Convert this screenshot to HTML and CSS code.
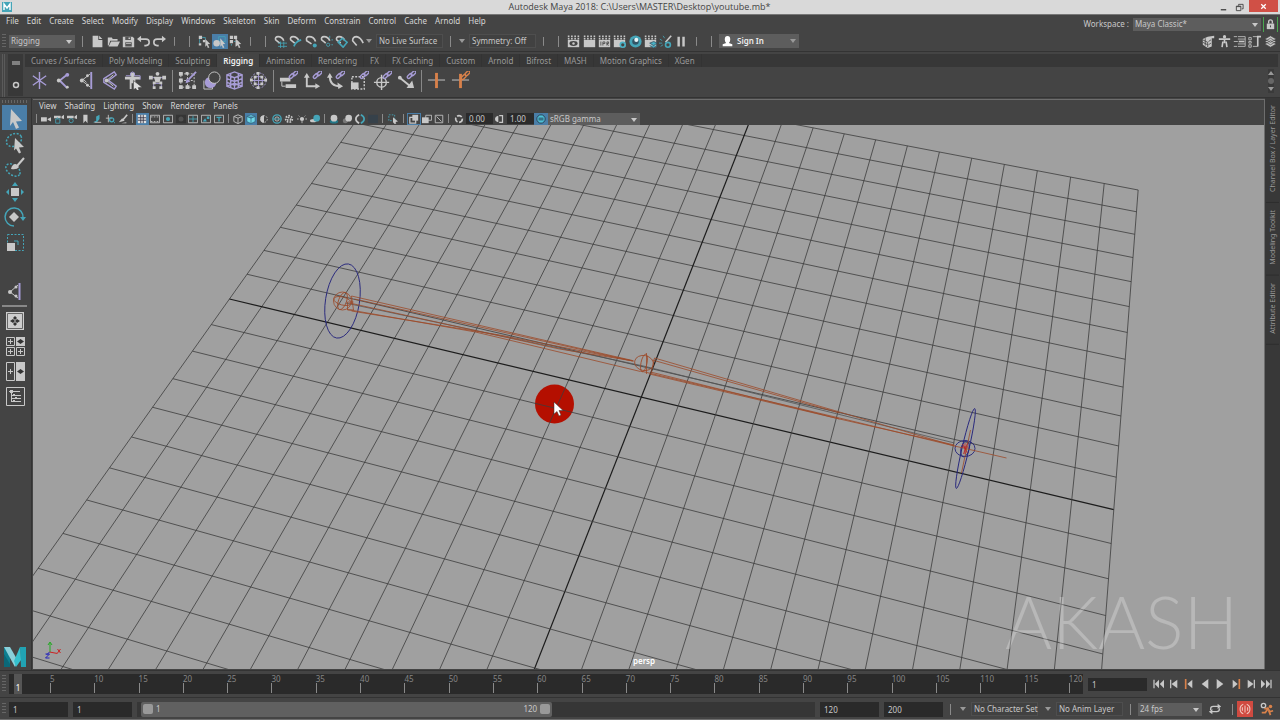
FILE: index.html
```html
<!DOCTYPE html>
<html lang="en">

<head>
    <meta charset="UTF-8">
    <meta name="viewport" content="width=device-width, initial-scale=1.0">
    <title>Autodesk Maya 2018</title>
    <link rel="stylesheet" href="styles.css">
</head>

<body>
    <header class="titlebar">
        <svg class="app-icon" viewBox="0 0 10 10"><path class="tf" d="M0 0h10v10H0z"/><path d="M2 8V2l3 4 3-4v6" fill="none" stroke="#fff" stroke-width="1.4"/></svg>
        <h1>Autodesk Maya 2018: C:\Users\MASTER\Desktop\youtube.mb*</h1>
        <div class="window-buttons">
            <button aria-label="Minimize"><svg viewBox="0 0 10 10"><path d="M2 7.5h6" stroke="#444" stroke-width="1.5"/></svg></button>
            <button aria-label="Restore"><svg viewBox="0 0 10 10"><path d="M4 3V1.500h5v5H7.500M1.500 3.500h5v5h-5zM1.500 4h5" fill="none" stroke="#444"/></svg></button>
            <button class="win-close" aria-label="Close"><svg viewBox="0 0 10 10"><path d="M2.500 2.500l5 5m0-5l-5 5" stroke="#fff" stroke-width="1.400"/></svg></button>
        </div>
    </header>

    <div class="menubar">
        <nav class="menu">
            <a href="#">File</a><a href="#">Edit</a><a href="#">Create</a><a href="#">Select</a><a href="#">Modify</a><a href="#">Display</a><a href="#">Windows</a><a href="#">Skeleton</a><a href="#">Skin</a><a href="#">Deform</a><a href="#">Constrain</a><a href="#">Control</a><a href="#">Cache</a><a href="#">Arnold</a><a href="#">Help</a>
        </nav>
        <div class="workspace">
            <label for="workspace">Workspace :</label>
            <span class="combo combo-workspace"><select id="workspace"><option>Maya Classic*</option></select></span>
            <button class="lock" aria-label="Lock workspace"><svg viewBox="0 0 14 14"><path class="lf" d="M3 6h8v6H3z"/><path class="l w15" d="M5 6V4q0-2 2-2t2 2v2"/><path d="M7 8v2" stroke="#444"/></svg></button>
        </div>
    </div>

    <!-- Status line -->
    <div class="status">
        <i class="grip"></i>
        <span class="combo combo-mode"><select aria-label="Menu set"><option>Rigging</option></select></span>
        <i class="sep"></i>
        <div class="group g5">
            <button aria-label="New scene"><svg viewBox="0 0 16 16"><path class="lf" d="M2 1h7v5h5v9H2zM10 1l4 4h-4z"/></svg></button>
            <button aria-label="Open scene"><svg viewBox="0 0 16 16"><path class="lf" d="M1 3h5l1 2h6v2H4l-2 6H1zM5 8h11l-3 6H2z"/></svg></button>
            <button aria-label="Save scene"><svg viewBox="0 0 16 16"><path class="lf" d="M1 2h12l2 2v11H1z"/><path d="M4 2h7v4H4zM4 9h8v5H4z" fill="#555"/><path class="lf" d="M8 3h2v2H8zM5 10h6v1H5z"/></svg></button>
            <button aria-label="Undo"><svg viewBox="0 0 16 16"><path class="l w2" d="M3 5h8q4 0 4 4t-4 4H9"/><path class="lf" d="M0 5l5-4v8z"/></svg></button>
            <button aria-label="Redo"><svg viewBox="0 0 16 16"><path class="l w2" d="M13 5H5Q1 5 1 9t4 4h2"/><path class="lf" d="M16 5l-5-4v8z"/></svg></button>
        </div>
        <i class="sep tip"></i>
        <i class="sep"></i>
        <div class="group g3">
            <button aria-label="Select by hierarchy"><svg viewBox="0 0 16 16"><path class="lf" d="M1 1h4v4H1zM1 10h3v3H1zM6 6h3v3H6z"/><path class="t" d="M2 5v5M5 3h4v3"/><path class="lf" d="M9 5l6 6-3 .5 2 4-2 .5-1-3.500-2 2z"/></svg></button>
            <button class="active" aria-label="Select by object"><svg viewBox="0 0 16 16"><path class="t" d="M7 2h8v6H7z"/><circle class="lf" cx="4.500" cy="10" r="4"/><path class="lf" d="M9 4l6 7-3 .5 2 4-2 .5-1-3.500-2 2z"/></svg></button>
            <button aria-label="Select by component"><svg viewBox="0 0 16 16"><path class="lf" d="M1 1h4v4H1zM6 1h4v4H6zM1 6h4v4H1z"/><path class="t" d="M6 8h2M3 11v2"/><path class="lf" d="M8 4l7 7-3 .5 2 4-2 .5-1-3.500-3 2z"/></svg></button>
        </div>
        <i class="sep tip"></i>
        <i class="sep"></i>
        <div class="group g6">
            <button aria-label="Snap to grids"><svg viewBox="0 0 16 16"><path class="l w2" d="M7 10L2 6Q1 2 5 2q5 0 7 5"/><path class="t" d="M8 8v8M12 8v8M5 10h11M5 14h11"/></svg></button>
            <button aria-label="Snap to curves"><svg viewBox="0 0 16 16"><path class="l w2" d="M7 10L2 6Q1 2 5 2q5 0 7 5"/><path class="t w2" d="M6 14Q8 8 15 6"/></svg></button>
            <button aria-label="Snap to points"><svg viewBox="0 0 16 16"><path class="l w2" d="M8 11L2 7Q1 2 5 2q6 0 8 6"/><circle class="tf" cx="12" cy="13" r="2.500"/></svg></button>
            <button aria-label="Snap to projected center"><svg viewBox="0 0 16 16"><path class="l w2" d="M7 10L2 6Q1 2 5 2q5 0 7 5"/><circle class="t" cx="10" cy="12" r="2"/><path class="t" d="M12 1v3M14 6h2M14 12h2"/></svg></button>
            <button aria-label="Snap to view planes"><svg viewBox="0 0 16 16"><path class="l w2" d="M7 10L2 6Q1 2 5 2q5 0 7 5"/><path class="t w2" d="M4 9l5-5 6 5-5 6z"/></svg></button>
            <button aria-label="Make live"><svg viewBox="0 0 16 16"><path class="l w2" d="M7 13L2 7Q2 2 7 2q5 1 8 8"/></svg></button>
        </div>
        <i class="caret"></i>
        <button class="field-btn">No Live Surface</button>
        <i class="sep"></i>
        <i class="caret"></i>
        <button class="field-btn">Symmetry: Off</button>
        <i class="sep tip"></i>
        <i class="sep"></i>
        <div class="group g8">
            <button aria-label="Open render view"><svg viewBox="0 0 16 16"><path class="clap" d="M1 1.500h14M1 4.500h14"/><path class="lf" d="M1 6h14v9H1z"/><ellipse cx="8" cy="10.500" rx="5" ry="3" fill="#444"/><circle class="lf" cx="8" cy="10.500" r="1.500"/></svg></button>
            <button aria-label="Render current frame"><svg viewBox="0 0 16 16"><path class="clap" d="M1 1.500h14M1 4.500h14"/><path class="lf" d="M1 6h14v9H1z"/></svg></button>
            <button aria-label="IPR render"><svg viewBox="0 0 16 16"><path class="clap" d="M1 1.500h14M1 4.500h14"/><path class="lf" d="M1 6h14v9H1z"/><path d="M3.500 8v5M6 13V8.500h2.500v2H6M11 13V8.500h2v2h-2l2 2.500" fill="none" stroke="#444"/></svg></button>
            <button aria-label="Render settings"><svg viewBox="0 0 16 16"><path class="clap" d="M1 1.500h14M1 4.500h14"/><path class="lf" d="M1 6h14v9H1z"/><circle cx="12" cy="12" r="3" fill="#444" stroke="#4ab0c4" stroke-width="2"/></svg></button>
            <button aria-label="Hypershade"><svg viewBox="0 0 16 16"><circle class="tf" cx="8" cy="8" r="7.500"/><circle cx="8" cy="8" r="4" fill="#356"/><circle cx="9" cy="6" r="2.500" fill="#e8f5f8"/></svg></button>
            <button aria-label="Render setup"><svg viewBox="0 0 16 16"><path class="clap" d="M1 1.500h14M1 4.500h14"/><path class="lf" d="M1 6h14v9H1z"/><path d="M7 10l5-2 4 2-4 3zM7 13l5 3 4-3" fill="#4ab0c4" stroke="#356"/></svg></button>
            <button aria-label="Light editor"><svg viewBox="0 0 16 16"><path class="l w2" d="M15 1L8 9"/><path class="t" d="M1 5l3 2M0 10h4M5 1l2 3M2 14l3-2"/><circle class="t w2" cx="11" cy="12" r="3"/></svg></button>
            <button aria-label="Pause viewport"><svg viewBox="0 0 16 16"><path class="lf" d="M3 2h3v12H3zM9 2h3v12H9z"/></svg></button>
        </div>
        <i class="sep tip"></i>
        <i class="sep"></i>
        <button class="signin"><svg viewBox="0 0 16 16"><path fill="#fff" d="M4 5q0-5 4-5t4 5q0 3-2 5l5 2v3H1v-3l5-2Q4 8 4 5z"/></svg><span>Sign In</span><i class="caret"></i></button>
        <div class="group g5 status-end">
            <button aria-label="Modeling toolkit"><svg viewBox="0 0 16 16"><path class="lf" d="M1 5l6-3 8-1v3h-3v10l-5 2-6-4z"/><path d="M1 6l6 3v6M4 4v9M1 9l6 3M8 8l3-2M8 12l3-2" fill="none" stroke="#444"/></svg></button>
            <button aria-label="Character controls"><svg viewBox="0 0 16 16"><path class="l w2" d="M1 5h14M8 4v6M6 8L5 15M10 8l1 7"/><circle class="lf" cx="8" cy="2" r="2"/></svg></button>
            <button aria-label="Attribute editor"><svg viewBox="0 0 16 16"><path class="l" d="M1 2h4M6 2h9M6 5h9M1 8h5M6 11h9M1 14h4M6 14h9M15 2v12"/><path class="l w2" d="M7 8h7"/></svg></button>
            <button aria-label="Tool settings"><svg viewBox="0 0 16 16"><path class="l" d="M1 3h3v3H1zM1 8h3v2H1zM1 12h3v3H1zM6 2h6M6 14h6"/><path class="l w2" d="M11 2h5M12 3v11"/></svg></button>
            <button aria-label="Channel box"><svg viewBox="0 0 16 16"><path d="M1 11l7-4 7 4-7 4zM1 8l7-4 7 4-7 4zM1 5l7-4 7 4-7 4z" fill="#c8c8c8" stroke="#444" stroke-width=".8"/></svg></button>
        </div>
    </div>

    <!-- Shelf -->
    <div class="shelf">
        <i class="grip"></i>
        <div class="shelf-side">
            <button aria-label="Shelf tabs"><svg viewBox="0 0 8 8"><path class="l" d="M0 3h8M0 5h8"/></svg></button>
            <button aria-label="Shelf options"><svg viewBox="0 0 8 8"><circle class="l w15" cx="4" cy="4" r="2.500"/></svg></button>
        </div>
        <div class="shelf-main">
            <div class="tabs">
                <button>Curves / Surfaces</button><button>Poly Modeling</button><button>Sculpting</button><button class="current">Rigging</button><button>Animation</button><button>Rendering</button><button>FX</button><button>FX Caching</button><button>Custom</button><button>Arnold</button><button>Bifrost</button><button>MASH</button><button>Motion Graphics</button><button>XGen</button>
            </div>
            <div class="shelf-tools">
                <div class="group s6">
                    <button aria-label="Locator"><svg viewBox="0 0 20 20"><path class="p w15" d="M10 1v18M3 5l14 10M17 5L3 15"/></svg></button>
                    <button aria-label="Create joints"><svg viewBox="0 0 20 20"><path class="p w2" d="M15 3L6 10l8 8"/><circle class="lf" cx="5" cy="10" r="2"/><circle class="pf" cx="14" cy="4" r="2"/><circle class="lf" cx="14" cy="17" r="1.500"/></svg></button>
                    <button aria-label="IK handle"><svg viewBox="0 0 20 20"><path class="l" d="M14 3L5 10l9 7M6 8l4 4"/><circle class="lf" cx="5" cy="10" r="2"/><circle class="lf" cx="11" cy="5" r="1.500"/><circle class="lf" cx="11" cy="15" r="1.500"/><path class="p w2" d="M15 1v18"/></svg></button>
                    <button aria-label="Bind skin"><svg viewBox="0 0 20 20"><path class="p w15" d="M14 1L3 8v4l11 7 2-3-8-6 8-6z"/><path class="l" d="M13 4L6 10l7 6"/><circle class="lf" cx="6" cy="10" r="2"/></svg></button>
                    <button aria-label="Quick rig"><svg viewBox="0 0 20 20"><circle class="lf" cx="9" cy="4" r="2.500"/><path class="lf" d="M1 6h16v3h-5v10h-2v-6H8v6H6V9H1z"/><path class="p" d="M2 5h5q-1-4 2-4t2 4h6v4"/><path d="M10 10l9 7-4 .5 1 3-2 .5-2-3-2 2z" fill="#ddd" stroke="#444" stroke-width=".7"/></svg></button>
                    <button aria-label="Human IK"><svg viewBox="0 0 20 20"><circle class="lf" cx="10" cy="3" r="2"/><path class="p" d="M3 7h14M6 18v-5h8v5"/><path class="lf" d="M6 6h8l-2 6H8zM1 5h4v4H1zM15 5h4v4h-4zM5 11h3v3H5zM12 11h3v3h-3zM5 16h3v3H5zM12 16h3v3h-3z"/></svg></button>
                </div>
                <i class="shelf-sep"></i>
                <div class="group s4">
                    <button aria-label="Paint weights"><svg viewBox="0 0 20 20"><path class="l dash" d="M3 3h14v14H3zM10 3v14M3 10h14"/><path class="lf" d="M1 1h4v4H1zM8 1h3v3H8zM1 8h4v4H1zM1 15h4v4H1zM8 15h4v4H8zM15 15h4v4h-4z"/><path class="p w2" d="M19 1l-8 8"/><path class="pf" d="M8 13l1-5 4 3z"/></svg></button>
                    <button aria-label="Blend shape"><svg viewBox="0 0 20 20"><path class="l" d="M2 10v9h9v-3"/><circle class="pf" cx="9" cy="12" r="6"/><circle cx="13" cy="7" r="6" fill="#444" stroke="#c8c8c8"/></svg></button>
                    <button aria-label="Lattice"><svg viewBox="0 0 20 20"><path class="p w15" d="M2 4l8-3 8 3v12l-8 3-8-3zM2 4l8 3 8-3M2 8l8 3 8-3M2 12l8 3 8-3M10 7v12M6 3v14M14 3v14M2 16l8-3 8 3"/></svg></button>
                    <button aria-label="Cluster"><svg viewBox="0 0 20 20"><circle class="p dash" cx="10" cy="10" r="8"/><path class="p" d="M10 3v14M3 10h14M6 6h8v8H6z"/><path class="lf" d="M8 1h3v3H8zM8 16h3v3H8zM1 8h3v3H1zM16 8h3v3h-3zM5 5h3v3H5zM12 5h3v3h-3zM5 12h3v3H5zM12 12h3v3h-3z"/></svg></button>
                </div>
                <i class="shelf-sep"></i>
                <div class="group s6">
                    <button aria-label="Parent constraint"><svg viewBox="0 0 20 20"><path class="lf" d="M1 7h11v4H1zM7 14h11v4H7z"/><path class="l" d="M3 11v5h4"/><g class="p w15"><rect x="10" y="4" width="6" height="3" rx="1.500" transform="rotate(-45 13 5)"/><rect x="14" y="1" width="6" height="3" rx="1.500" transform="rotate(-45 17 2)"/></g></svg></button>
                    <button aria-label="Point constraint"><svg viewBox="0 0 20 20"><path class="l w2" d="M4 5v11h11"/><path class="lf" d="M1 7l3-5 3 5zM13 13l5 3-5 3z"/><g class="p w15"><rect x="10" y="4" width="6" height="3" rx="1.500" transform="rotate(-45 13 5)"/><rect x="14" y="1" width="6" height="3" rx="1.500" transform="rotate(-45 17 2)"/></g></svg></button>
                    <button aria-label="Orient constraint"><svg viewBox="0 0 20 20"><path class="l w2" d="M4 6q0 10 11 10"/><path class="lf" d="M1 7l3-5 3 5zM12 12l6 4-5 3z"/><g class="p w15"><rect x="10" y="4" width="6" height="3" rx="1.500" transform="rotate(-45 13 5)"/><rect x="14" y="1" width="6" height="3" rx="1.500" transform="rotate(-45 17 2)"/></g></svg></button>
                    <button aria-label="Scale constraint"><svg viewBox="0 0 20 20"><path class="l dash w15" d="M2 6h13v13H2z"/><path class="lf" d="M1 12h8v7H1z"/><g class="p w15"><rect x="10" y="4" width="6" height="3" rx="1.500" transform="rotate(-45 13 5)"/><rect x="14" y="1" width="6" height="3" rx="1.500" transform="rotate(-45 17 2)"/></g></svg></button>
                    <button aria-label="Aim constraint"><svg viewBox="0 0 20 20"><circle class="l w15" cx="9" cy="12" r="5"/><path class="l w15" d="M9 4v16M1 12h16"/><g class="p w15"><rect x="10" y="4" width="6" height="3" rx="1.500" transform="rotate(-45 13 5)"/><rect x="14" y="1" width="6" height="3" rx="1.500" transform="rotate(-45 17 2)"/></g></svg></button>
                    <button aria-label="Pole vector constraint"><svg viewBox="0 0 20 20"><path class="l w2" d="M3 7l11 9"/><circle class="lf" cx="3" cy="7" r="2"/><path class="lf" d="M10 18h8l-2-8z"/><g class="p w15"><rect x="10" y="4" width="6" height="3" rx="1.500" transform="rotate(-45 13 5)"/><rect x="14" y="1" width="6" height="3" rx="1.500" transform="rotate(-45 17 2)"/></g></svg></button>
                </div>
                <i class="shelf-sep"></i>
                <div class="group s2">
                    <button aria-label="Set key"><svg viewBox="0 0 20 20"><path class="l" d="M1 9.500h18"/><path class="o w3" d="M10 2v16"/></svg></button>
                    <button aria-label="Set driven key"><svg viewBox="0 0 20 20"><path class="l" d="M1 9.500h18"/><path class="o w3" d="M10 3v15"/><g class="o w15"><rect x="10" y="5" width="6" height="3" rx="1.500" transform="rotate(-45 13 6)"/><rect x="14" y="1" width="6" height="3" rx="1.500" transform="rotate(-45 17 2)"/></g></svg></button>
                </div>
                <div class="shelf-scroll"><i class="up"></i><i class="knob"></i><i class="caret"></i></div>
            </div>
        </div>
    </div>

    <main class="workarea">
        <aside class="toolbox">
            <i class="grip-h"></i>
            <button class="active" aria-label="Select tool"><svg viewBox="0 0 24 24"><path class="lf" d="M8 3l11 12-6 .5 3 6-3 1.500-3-7-3 4z"/></svg></button>
            <button aria-label="Lasso tool"><svg viewBox="0 0 24 24"><ellipse class="t w15 dash" cx="11" cy="9" rx="8" ry="6" transform="rotate(-30 11 9)"/><path class="lf" d="M12 7l9 9-5 .5 2 5-2 1-3-5-2 2z"/></svg></button>
            <button aria-label="Paint selection tool"><svg viewBox="0 0 24 24"><ellipse class="t w15 dash" cx="10" cy="14" rx="8" ry="5" transform="rotate(35 10 14)"/><path class="l w2" d="M21 2l-7 8"/><path class="lf" d="M8 13q1-5 5-5l3 3q-2 3-8 2z"/></svg></button>
            <button aria-label="Move tool"><svg viewBox="0 0 24 24"><path class="lf" d="M8 7h8v8H8z"/><path class="tf" d="M12 1l3 4H9zM12 21l3-4H9zM3 11l3-3v6zM21 11l-3-3v6z"/></svg></button>
            <button aria-label="Rotate tool"><svg viewBox="0 0 24 24"><path class="t w15" d="M11 20A9 9 0 1 1 20 12"/><path class="tf" d="M17 11h6l-3 4z"/><path class="lf" d="M11 6l5 5-5 5-5-5z"/></svg></button>
            <button aria-label="Scale tool"><svg viewBox="0 0 24 24"><path class="t dash" d="M4.500 3.500h16v16h-16z"/><path class="t" d="M11 10h4v4"/><path class="lf" d="M4 12h8v8H4z"/></svg></button>
            <button class="last-tool" aria-label="IK handle tool"><svg viewBox="0 0 24 24"><path class="l" d="M15 5l-8 7 8 6"/><circle class="lf" cx="7" cy="12" r="2"/><circle class="lf" cx="13" cy="7" r="1.500"/><circle class="lf" cx="13" cy="16" r="1.500"/><path class="p w2" d="M16.500 3v17"/></svg></button>
            <hr>
            <button aria-label="Single view"><svg viewBox="0 0 24 24"><path d="M3 3h18v18H3z" fill="#ccc"/><path d="M4.500 4.500h15v15h-15z" fill="none" stroke="#666"/><path d="M12 7l2 2-2 2-2-2zM12 13l2 2-2 2-2-2zM7 12l3-2 2 2-2 2zM12 12l2-2 3 2-3 2z" fill="#333"/></svg></button>
            <button aria-label="Four view"><svg viewBox="0 0 24 24"><path class="l" d="M3.500 3.500h8v8h-8zM3.500 13.500h8v8h-8zM13.500 13.500h8v8h-8zM5 7.500h5M7.500 5v5M5 17.500h5M7.500 15v5M15 17.500h5M17.500 15v5"/><path class="lf" d="M13 3h9v9h-9z"/><path d="M14 7.500l3.500-2.500L21 7.500 17.500 10z" fill="#333"/></svg></button>
            <button aria-label="Two view"><svg viewBox="0 0 24 24"><path class="l" d="M3.500 3.500h8v18h-8zM5 12.500h5M7.500 10v5"/><path class="lf" d="M13 3h9v19h-9z"/><path d="M14 12.500l3.500-2.500 3.500 2.500-3.500 2.500z" fill="#333"/></svg></button>
            <button aria-label="Outliner"><svg viewBox="0 0 24 24"><path class="l" d="M3.500 3.500h18v18h-18zM6 7.500h11M8.500 7v11M9 11.500h9M9 14.500h9M9 17.500h9"/><path class="lf" d="M7 6h3v3H7zM10 10h2v2h-2zM12 13h2v2h-2zM10 16h2v2h-2z"/></svg></button>
            <svg class="maya-logo" viewBox="0 0 24 22"><path fill="#0d7f90" d="M1 1h6v20H1z"/><path fill="#8ad0da" d="M1 1h6l8 14-3 6z"/><path fill="#21a3b4" d="M17 1h6v20h-5z"/><path fill="#35c0cd" d="M17 1l1 13-5 7-2-6z"/><path fill="#0a6878" d="M1 21V8l6 10v3z"/></svg>
        </aside>

        <section class="panel">
            <nav class="menu panel-menu">
                <a href="#">View</a><a href="#">Shading</a><a href="#">Lighting</a><a href="#">Show</a><a href="#">Renderer</a><a href="#">Panels</a>
            </nav>
            <div class="panel-tools">
                <i class="sep"></i>
                <div class="group p7">
                    <button aria-label="Select camera"><svg viewBox="0 0 12 12"><path class="lf" d="M0 4h7v5H0zM8 6l4-2v5L8 7z"/></svg></button>
                    <button aria-label="Lock camera"><svg viewBox="0 0 12 12"><path class="lf" d="M0 2h8v3H0zM9 3l3-2v5L9 5z"/><path class="t" d="M2 6h5v5H2zM4 4v2"/></svg></button>
                    <button aria-label="Camera attributes"><svg viewBox="0 0 12 12"><path class="lf" d="M0 2h8v3H0zM9 3l3-2v5L9 5z"/><circle class="t" cx="5" cy="8" r="2.500"/></svg></button>
                    <button aria-label="Bookmarks"><svg viewBox="0 0 12 12"><path class="lf" d="M4 1h5v10L6.500 8 4 11z"/></svg></button>
                    <button aria-label="Image plane"><svg viewBox="0 0 12 12"><path class="tf" d="M1 10l4-2V3l4-2v5l-3 4z"/><path class="l" d="M3 10h8"/></svg></button>
                    <button aria-label="2D pan/zoom"><svg viewBox="0 0 12 12"><path class="l" d="M4 1v9M1 5h7"/><circle class="t w15" cx="8" cy="7" r="2.500"/><path class="t" d="M10 9l2 2"/></svg></button>
                    <button aria-label="Grease pencil"><svg viewBox="0 0 12 12"><path class="l w2" d="M11 1L6 7"/><path class="lf" d="M1 10l4-5 3 3zM4 11h6v-1z"/></svg></button>
                </div>
                <i class="sep"></i>
                <div class="group p7">
                    <button class="active" aria-label="Grid"><svg viewBox="0 0 12 12"><path fill="#e0e0e0" d="M1 1h10v10H1z"/><path d="M4.500 1v10M7.500 1v10M1 4.500h10M1 7.500h10" stroke="#334"/></svg></button>
                    <button aria-label="Film gate"><svg viewBox="0 0 12 12"><path class="l" d="M.5 1.500h11v9H.5z"/><path class="l dash" d="M1 3.500h10M1 9h10"/></svg></button>
                    <button aria-label="Resolution gate"><svg viewBox="0 0 12 12"><path class="l" d="M.5 1.500h11v9H.5z"/><circle class="tf" cx="6" cy="6" r="2.500"/></svg></button>
                    <button aria-label="Gate mask"><svg viewBox="0 0 12 12"><path fill="#353535" d="M0 1h12v10H0z"/><circle fill="#505050" cx="6" cy="6" r="3"/></svg></button>
                    <button aria-label="Field chart"><svg viewBox="0 0 12 12"><path class="l" d="M.5 1.500h11v9H.5z"/><path class="t" d="M6 2v8M1 6h10"/></svg></button>
                    <button aria-label="Safe action"><svg viewBox="0 0 12 12"><path class="l" d="M.5 1.500h11v9H.5z"/><path class="tf" d="M2 9l3-4 2 4zM7 3h3v3H7z"/></svg></button>
                    <button aria-label="Safe title"><svg viewBox="0 0 12 12"><path class="l" d="M.5 1.500h11v9H.5z"/><path class="t w15" d="M3 4h6M6 4v5"/></svg></button>
                </div>
                <i class="sep"></i>
                <div class="group p7">
                    <button aria-label="Wireframe"><svg viewBox="0 0 12 12"><path class="l" d="M6 1l5 2v6l-5 2.500L1 9V3zM1 3l5 2 5-2M6 5v6"/></svg></button>
                    <button class="active" aria-label="Smooth shade"><svg viewBox="0 0 12 12"><path fill="#6fd6e8" stroke="#26586a" stroke-width=".7" d="M6 1l5 2v6l-5 2.500L1 9V3zM1 3l5 2 5-2M6 5v6"/></svg></button>
                    <button aria-label="Default material"><svg viewBox="0 0 12 12"><circle class="l dash" cx="6" cy="6" r="4"/><path class="lf" d="M6 1.500a4.500 4.500 0 0 0 0 9z"/></svg></button>
                    <button aria-label="Wireframe on shaded"><svg viewBox="0 0 12 12"><circle class="t w15" cx="6" cy="6" r="5"/><circle class="l" cx="6" cy="6" r="2.500"/><path class="t" d="M1 6h10"/></svg></button>
                    <button aria-label="Textured"><svg viewBox="0 0 12 12"><circle class="l dash w2" cx="6" cy="6" r="4"/><circle class="l dash w2" cx="6" cy="6" r="2"/></svg></button>
                    <button aria-label="Use all lights"><svg viewBox="0 0 12 12"><circle class="lf" cx="6" cy="6" r="2.500"/><path class="l" d="M6 8v3M0 6h2M10 6h2M2 2l1 1M10 2L9 3"/></svg></button>
                    <button aria-label="Shadows"><svg viewBox="0 0 12 12"><ellipse class="lf" cx="4" cy="8" rx="4" ry="2"/><circle class="tf" cx="8" cy="5" r="4"/></svg></button>
                </div>
                <i class="sep"></i>
                <div class="group p4">
                    <button aria-label="Ambient occlusion"><svg viewBox="0 0 12 12"><ellipse cx="6" cy="9" rx="5" ry="2.500" fill="#278"/><circle class="lf" cx="6" cy="5" r="4"/></svg></button>
                    <button aria-label="Motion blur"><svg viewBox="0 0 12 12"><circle cx="4" cy="8" r="3" fill="#777"/><circle class="lf" cx="8" cy="5" r="4"/></svg></button>
                    <button aria-label="Anti-aliasing"><svg viewBox="0 0 12 12"><path class="l w2" d="M5 1Q1 3 1 6t4 5"/><path class="t w2" d="M7 1q4 2 4 5t-4 5"/></svg></button>
                    <button aria-label="Depth of field"><svg viewBox="0 0 12 12"><path fill="#36414a" d="M0 1h12v10H0z"/></svg></button>
                </div>
                <i class="sep"></i>
                <div class="group p1">
                    <button aria-label="Isolate select"><svg viewBox="0 0 12 12"><path class="t dash" d="M1 1h7v7H1z"/><path class="lf" d="M6 4l6 5-3 .5 1 2-2 .5-2-2z"/></svg></button>
                </div>
                <i class="sep"></i>
                <div class="group p3">
                    <button class="outlined" aria-label="X-ray"><svg viewBox="0 0 12 12"><path class="lf" d="M4 1h7v7H4z"/><path class="l w15" d="M1 4h7v7H1z"/></svg></button>
                    <button aria-label="X-ray active"><svg viewBox="0 0 12 12"><path class="l" d="M4.500 1.500h7v6h-7z"/><path class="lf" d="M0 4h8v7H0z"/></svg></button>
                    <button aria-label="X-ray joints"><svg viewBox="0 0 12 12"><path class="l" d="M1.500 1.500h9v9h-9zM3 3l6 6"/></svg></button>
                </div>
                <i class="sep"></i>
                <div class="group p1"><button aria-label="Reset exposure"><svg viewBox="0 0 12 12"><circle class="l w2" stroke-dasharray="6 2" cx="6" cy="6" r="4"/></svg></button></div>
                <input class="num" aria-label="Exposure" value="0.00">
                <div class="group p1"><button aria-label="Reset gamma"><svg viewBox="0 0 12 12"><path class="lf" d="M4 2v8Q0 9 0 6t4-4z"/><path class="l w15" d="M5 2h4v8H5"/></svg></button></div>
                <input class="num" aria-label="Gamma" value="1.00">
                <div class="group p1"><button class="active" aria-label="Color management"><svg viewBox="0 0 12 12"><circle cx="6" cy="6" r="5" fill="#4fc0d8" stroke="#234"/><path d="M3 5h6M3 7h6" stroke="#234"/></svg></button></div>
                <span class="combo combo-gamma"><select aria-label="View transform"><option>sRGB gamma</option></select></span>
            </div>
            <div class="viewport">
                <svg class="scene" viewBox="33 125 1232 544" preserveAspectRatio="xMidYMid slice">
                    <circle cx="555" cy="404" r="19.500" fill="#b40f00"/>
                    <g id="grid"></g>
                    <g class="control">
                        <ellipse cx="343" cy="301" rx="17" ry="37.500" transform="rotate(9 343 301)"/>
                        <ellipse cx="966" cy="448.500" rx="3.500" ry="41" transform="rotate(13 966 448.500)"/>
                        <ellipse cx="965.500" cy="448.500" rx="10" ry="8"/>
                        <ellipse cx="965.500" cy="449" rx="4" ry="8" transform="rotate(13 965.500 449)"/>
                    </g>
                    <path class="axis-bone" d="M346 303L644 366L955 443"/>
                    <g class="bone">
                        <circle cx="343" cy="301" r="9"/>
                        <ellipse cx="343" cy="301" rx="4" ry="9" transform="rotate(20 343 301)"/>
                        <ellipse cx="343" cy="301" rx="9" ry="4" transform="rotate(15 343 301)"/>
                        <path d="M352 296l2 14h-6v-8h6M352 296L633 360.500M355 299L633 361M348 309.500L476 332L641 371.500M352 311L500 335L634 361M350 303L560 349L634 361"/>
                        <ellipse cx="644.500" cy="363" rx="9.500" ry="7.500" transform="rotate(12 644.500 363)"/>
                        <ellipse cx="644.500" cy="363" rx="3" ry="9" transform="rotate(12 644.500 363)"/>
                        <path d="M655 358l-3 14M647 353v21"/>
                        <path d="M655 358L840 412L955 446M653 360L840 413M641 371L840 418L955 446M651 372L840 419L955 445M650 374L840 419"/>
                        <path d="M955 446L1007 458M971 430l-9 43"/>
                    </g>
                    <path d="M963 444l5 9M968 443l-4 11M965.500 443v11M962 447h7" stroke="#b22" stroke-width=".8" fill="none"/>
                    <g class="gnomon">
                        <path d="M50.500 652v-9m-2 2l2-3 2 3" stroke="#2a2"/>
                        <path d="M50 652l8 1.500M58 649l3 4m0-4l-3 4" stroke="#c22"/>
                        <path d="M50 652l-3 3M46 654h4l-4 4h4" stroke="#22b"/>
                    </g>
                    <path d="M554.500 402v12l3-2.500 2 4.500 2-1-2-4.500h4z" fill="#fff" stroke="#333" stroke-width=".5"/>
                </svg>
                <span class="camera-name">persp</span>
                <span class="watermark">AKASH</span>
            </div>
        </section>

        <aside class="side-tabs">
            <button>Channel Box / Layer Editor</button>
            <button>Modeling Toolkit</button>
            <button>Attribute Editor</button>
        </aside>
    </main>

    <div class="timeline">
        <i class="grip"></i>
        <div class="track">
            <span class="playhead">1</span>
            <ol id="ticks"></ol>
        </div>
        <input class="frame" aria-label="Current time" value="1">
        <div class="group playback">
            <button aria-label="Go to start"><svg viewBox="0 0 14 12"><path class="l w15" d="M1 1v10"/><path class="lf" d="M7 1v10L2 6zM13 1v10L8 6z"/></svg></button>
            <button aria-label="Step back frame"><svg viewBox="0 0 14 12"><path class="l w15" d="M3 1v10"/><path class="lf" d="M11 1v10L4 6z"/></svg></button>
            <button aria-label="Step back key"><svg viewBox="0 0 14 12"><path class="o w2" d="M3 0v12"/><path class="lf" d="M11 1v10L5 6z"/></svg></button>
            <button aria-label="Play backwards"><svg viewBox="0 0 14 12"><path class="lf" d="M11 0v12L3 6z"/></svg></button>
            <button aria-label="Play forwards"><svg viewBox="0 0 14 12"><path class="lf" d="M3 0v12l8-6z"/></svg></button>
            <button aria-label="Step forward key"><svg viewBox="0 0 14 12"><path class="o w2" d="M11 0v12"/><path class="lf" d="M3 1v10l6-5z"/></svg></button>
            <button aria-label="Step forward frame"><svg viewBox="0 0 14 12"><path class="l w15" d="M11 1v10"/><path class="lf" d="M3 1v10l7-5z"/></svg></button>
            <button aria-label="Go to end"><svg viewBox="0 0 14 12"><path class="l w15" d="M13 1v10"/><path class="lf" d="M1 1v10l5-5zM7 1v10l5-5z"/></svg></button>
        </div>
    </div>

    <div class="range">
        <i class="grip"></i>
        <input class="frame" aria-label="Animation start" value="1">
        <input class="frame" aria-label="Playback start" value="1">
        <div class="range-slider">
            <div class="range-bar"><i></i><span>1</span><span class="range-end">120</span><i></i></div>
        </div>
        <input class="frame" aria-label="Playback end" value="120">
        <input class="frame" aria-label="Animation end" value="200">
        <i class="sep"></i>
        <i class="caret"></i>
        <button class="field-btn">No Character Set</button>
        <i class="caret"></i>
        <button class="field-btn">No Anim Layer</button>
        <i class="sep"></i>
        <span class="combo combo-fps"><select aria-label="Frame rate"><option>24 fps</option></select></span>
        <div class="group range-tools">
            <button aria-label="Loop"><svg viewBox="0 0 16 16"><path class="l w15" d="M3 9V8q0-3 3-3h6M13 7v1q0 3-3 3H4"/><path class="lf" d="M11 2l4 3-4 3zM5 8l-4 3 4 3z"/></svg></button>
            <i class="sep"></i>
            <button class="autokey" aria-label="Auto keyframe"><svg viewBox="0 0 16 16"><path d="M6 2.500a6 6 0 0 0 0 11M10 2.500a6 6 0 0 1 0 11M8 4v8M5 6v4M11 6v4" fill="none" stroke="#f0c8c0" stroke-width="1.200"/></svg></button>
            <button aria-label="Preferences"><svg viewBox="0 0 16 16"><circle class="l w15" cx="4" cy="4" r="2.500"/><circle class="of" cx="12" cy="5" r="2"/><path class="o w2" d="M5 8l4-1 2 4 4-1M9 8l-3 4H2M10 10l2 5"/></svg></button>
        </div>
    </div>

    <script src="scene.js"></script>
</body>

</html>
```
FILE: styles.css
```css
* {
    box-sizing: border-box;
}

body {
    margin: 0;
    height: 100vh;
    display: flex;
    flex-direction: column;
    overflow: hidden;
    background: #444;
    color: #c8c8c8;
    font-family: "Noto Sans", "Open Sans", sans-serif;
    font-size: 8px;
    line-height: 12px;
}

button,
input,
select {
    margin: 0;
    padding: 0;
    border: 0;
    border-radius: 0;
    background: none;
    color: inherit;
    font: inherit;
    white-space: nowrap;
}

a {
    color: inherit;
    text-decoration: none;
}

svg {
    display: block;
}

/* Icon paints: l light, t teal, p purple, o orange */
.l { fill: none; stroke: #c8c8c8; }
.t { fill: none; stroke: #45a5b8; }
.p { fill: none; stroke: #a79cd6; }
.o { fill: none; stroke: #d8814a; }
.lf { fill: #c8c8c8; }
.tf { fill: #45a5b8; }
.pf { fill: #a79cd6; }
.of { fill: #d8814a; }
.w15 { stroke-width: 1.5; }
.w2 { stroke-width: 2; }
.w3 { stroke-width: 3; }
.dash { stroke-dasharray: 2 1.5; }
.clap { stroke: #c8c8c8; stroke-width: 2; stroke-dasharray: 2 2; }

/* Title bar */
.titlebar {
    flex: none;
    height: 15px;
    display: flex;
    align-items: center;
    background: #d9d9d9;
    border-bottom: 1px solid #777;
    color: #444;
}

.titlebar h1 {
    flex: 1;
    margin: 0;
    padding-left: 52px;
    text-align: center;
    font-family: "Open Sans", sans-serif;
    font-size: 9px;
    font-weight: normal;
}

.app-icon {
    width: 10px;
    height: 10px;
    margin-left: 2px;
}

.window-buttons {
    display: flex;
    align-self: stretch;
}

.window-buttons button {
    width: 16px;
    display: grid;
    place-items: center;
}

.window-buttons svg {
    width: 9px;
    height: 9px;
}

.window-buttons .win-close {
    width: 29px;
    height: 12px;
    margin-right: 2px;
    margin-left: 2px;
    background: #d05046;
}

/* Menus */
.menubar {
    flex: none;
    height: 16px;
    display: flex;
    justify-content: space-between;
}

.menu {
    display: flex;
    gap: 8px;
    padding-left: 6px;
    color: #d6d6d6;
}

.workspace {
    display: flex;
    align-items: center;
    padding: 2px 2px 0 0;
}

.workspace label {
    margin-right: 4px;
}

.lock {
    width: 15px;
    height: 15px;
    margin-left: 2px;
    border: solid #4aa850;
    border-width: 0 1px;
}

.combo {
    position: relative;
    display: block;
    flex: none;
    height: 13px;
    background: #5d5d5d;
}

.combo select {
    display: block;
    width: 100%;
    height: 100%;
    padding-left: 2px;
    appearance: none;
}

.combo::after {
    content: "";
    position: absolute;
    right: 3px;
    top: 5px;
    border: solid transparent;
    border-width: 4px 3px 0;
    border-top-color: #c8c8c8;
    pointer-events: none;
}

.combo-workspace { width: 128px; }
.combo-mode { width: 66px; }
.combo-gamma { width: 92px; height: 12px; }
.combo-fps { width: 64px; }

/* Tool groups */
.group {
    flex: none;
    display: flex;
}

.group button {
    flex: 1;
    display: grid;
    place-items: center;
}

.group .active,
.toolbox .active {
    background: #4a7ea8;
}

.g3 { width: 46px; }
.g5 { width: 77px; }
.g6 { width: 92px; }
.g8 { width: 123px; }

.sep {
    flex: none;
    width: 15px;
    height: 11px;
    background: linear-gradient(#8a8a8a, #8a8a8a) center / 1px 100% no-repeat;
}

.sep.tip {
    background-size: 1px 80%;
}

.caret {
    flex: none;
    width: 0;
    border: solid transparent;
    border-width: 4px 3px 0;
    border-top-color: #999;
}

.grip {
    flex: none;
    width: 4px;
    margin: 0 3px 0 2px;
    align-self: stretch;
    background: repeating-linear-gradient(#666 0 1px, transparent 1px 3px);
}

.field-btn {
    flex: none;
    width: 67px;
    height: 14px;
    padding-left: 2px;
    border: 1px solid #4e4e4e;
    background: #414141;
    text-align: left;
}

/* Status line */
.status {
    flex: none;
    height: 21px;
    display: flex;
    align-items: center;
    border-bottom: 1px solid #333;
}

.status .grip {
    margin-top: 3px;
    margin-bottom: 3px;
}

.status .group button {
    height: 15px;
}

.status svg {
    width: 13px;
    height: 13px;
}

.status > .caret {
    margin: 0 4px 0 1px;
}

.signin {
    display: flex;
    align-items: center;
    width: 80px;
    height: 14px;
    padding: 0 3px;
    gap: 4px;
    background: #5d5d5d;
    color: #eee;
    font-weight: 600;
}

.signin svg {
    width: 11px;
    height: 11px;
}

.signin span {
    flex: 1;
    text-align: left;
}

.status-end {
    margin-left: auto;
    margin-right: 2px;
}

/* Shelf */
.shelf {
    flex: none;
    height: 46px;
    display: flex;
    padding-top: 2px;
    border-bottom: 1px solid #333;
}

.shelf .grip {
    width: 3px;
    border: solid #5a5a5a;
    border-width: 0 1px;
    background: none;
}

.shelf-side {
    width: 15px;
    height: 42px;
    display: flex;
    flex-direction: column;
    justify-content: space-between;
    align-items: center;
    padding: 5px 0 7px;
    background: #383838;
}

.shelf-side svg {
    width: 8px;
    height: 8px;
}

.shelf-main {
    flex: 1;
    min-width: 0;
}

.tabs {
    display: flex;
    height: 13px;
    margin: 0 2px;
    background: #373737;
    color: #999;
}

.tabs button {
    padding: 0 6px;
    border-right: 1px solid #333;
}

.tabs .current {
    background: #444;
    color: #eee;
    font-weight: 600;
}

.shelf-tools {
    display: flex;
    align-items: center;
    height: 27px;
    padding-left: 5px;
}

.shelf-tools svg {
    width: 19px;
    height: 19px;
}

.s2 { width: 47px; }
.s4 { width: 94px; }
.s6 { width: 141px; }

.shelf-sep {
    width: 1px;
    height: 22px;
    margin: 0 3px;
    background: #888;
}

.shelf-scroll {
    display: flex;
    flex-direction: column;
    align-items: center;
    gap: 3px;
    margin-left: auto;
    margin-right: 6px;
    padding: 2px 0;
    background: #3a3a3a;
}

.shelf-scroll .up {
    border: solid transparent;
    border-width: 0 3px 4px;
    border-bottom-color: #999;
}

.shelf-scroll .knob {
    width: 6px;
    height: 6px;
    border-radius: 3px;
    background: #666;
}

/* Work area */
.workarea {
    flex: 1;
    min-height: 0;
    display: flex;
}

.toolbox {
    width: 32px;
    flex: none;
    display: flex;
    flex-direction: column;
    padding: 2px 4px 0 2px;
    border-right: 1px solid #333;
}

.grip-h {
    height: 3px;
    margin-bottom: 2px;
    background: repeating-linear-gradient(90deg, #666 0 1px, transparent 1px 3px);
}

.toolbox button {
    height: 25px;
    display: grid;
    place-items: center;
}

.toolbox button svg {
    width: 24px;
    height: 24px;
}

.toolbox .last-tool {
    margin-top: 24px;
}

.toolbox hr {
    flex: none;
    width: 100%;
    height: 2px;
    margin: 1px 0;
    border: 0;
    background: #888;
}

.maya-logo {
    width: 24px;
    height: 22px;
    margin: auto 0 2px 1px;
}

.panel {
    flex: 1;
    min-width: 0;
    display: flex;
    flex-direction: column;
    margin: 1px 0 1px 1px;
    border: solid #6e6e6e;
    border-width: 1px 1px 0 0;
}

.panel-menu {
    height: 12px;
}

.panel-tools {
    display: flex;
    align-items: center;
    height: 13px;
}

.panel-tools .sep {
    width: 7px;
    height: 9px;
}

.panel-tools svg {
    width: 10px;
    height: 10px;
}

.panel-tools .group button {
    height: 12px;
}

.panel-tools .outlined {
    border: 1px solid #4a7ea8;
}

.p1 { width: 14px; }
.p3 { width: 38px; }
.p4 { width: 51px; }
.p7 { width: 89px; }

.num {
    width: 27px;
    height: 11px;
    padding-left: 3px;
    background: #2b2b2b;
}

.viewport {
    flex: 1;
    min-height: 0;
    position: relative;
    background: #a0a0a0;
}

.scene {
    position: absolute;
    width: 100%;
    height: 100%;
}

#grid line {
    stroke: #3c3c3c;
    stroke-width: 0.8;
}

#grid .axis {
    stroke: #1c1c1c;
    stroke-width: 1.2;
}

.control {
    fill: none;
    stroke: #26267c;
    stroke-width: 0.9;
}

.bone {
    fill: none;
    stroke: #9c4a2a;
    stroke-width: 0.8;
}

.axis-bone {
    fill: none;
    stroke: #555;
    stroke-width: 0.8;
}

.gnomon {
    fill: none;
}

.camera-name {
    position: absolute;
    bottom: 2px;
    left: 0;
    right: 9px;
    text-align: center;
    color: #fff;
    font-weight: 600;
}

.watermark {
    position: absolute;
    right: 26px;
    bottom: 18px;
    color: rgba(255, 255, 255, 0.25);
    font-family: Lato, sans-serif;
    font-size: 72px;
    font-weight: 300;
    line-height: 60px;
}

.side-tabs {
    flex: none;
    width: 15px;
    display: flex;
    flex-direction: column;
    background: #383838;
    color: #999;
    font-size: 7px;
}

.side-tabs button {
    writing-mode: vertical-rl;
    transform: rotate(180deg);
    padding: 10px 0 7px;
    width: 13px;
    margin-left: 1px;
    border-top: 1px solid #2e2e2e;
}

/* Time slider */
.timeline {
    flex: none;
    height: 28px;
    display: flex;
    align-items: center;
    border-top: 1px solid #333;
    border-bottom: 1px solid #333;
}

.timeline .grip,
.range .grip {
    margin-top: 4px;
    margin-bottom: 4px;
}

.track {
    position: relative;
    flex: 1;
    height: 20px;
    background: #2a2a2a;
}

#ticks {
    display: flex;
    margin: 0;
    padding: 0 0 0 41px;
    list-style: none;
    color: #858585;
    line-height: 9px;
}

#ticks li {
    flex: 1 1 0;
    min-width: 0;
}

#ticks li:last-child {
    flex: 0 0 14px;
}

#ticks li::after {
    content: "";
    display: block;
    width: 1px;
    height: 10px;
    background: #8a8a8a;
}

.playhead {
    position: absolute;
    left: 5px;
    top: 0;
    width: 8px;
    height: 20px;
    padding-top: 8px;
    background: #555;
    color: #fff;
    text-align: center;
}

.frame {
    flex: none;
    width: 59px;
    height: 15px;
    padding-left: 4px;
    background: #2a2a2a;
}

.timeline .frame {
    height: 13px;
    margin-left: 5px;
}

.playback {
    width: 123px;
    margin: 0 6px 0 4px;
}

.playback svg {
    width: 12px;
    height: 10px;
}

/* Range slider */
.range {
    flex: none;
    height: 22px;
    display: flex;
    align-items: center;
    padding-top: 1px;
    border-bottom: 1px solid #6e6e6e;
}

.range .frame {
    margin-right: 5px;
}

.range-slider {
    flex: 1;
    height: 15px;
    margin-right: 5px;
    padding-left: 4px;
    background: #363636;
}

.range-bar {
    display: flex;
    align-items: center;
    gap: 3px;
    width: 61%;
    height: 15px;
    padding: 0 2px;
    border-radius: 2px;
    background: #606060;
}

.range-bar i {
    width: 10px;
    height: 10px;
    border-radius: 2px;
    background: #999;
}

.range-end {
    margin-left: auto;
}

.range .sep {
    width: 5px;
}

.range > .caret {
    margin: 0 5px 0 7px;
}

.range .field-btn + .sep {
    margin: 0 5px;
}

.range-tools {
    width: 78px;
    align-items: center;
    gap: 2px;
}

.range-tools svg {
    width: 14px;
    height: 14px;
}

.range-tools .autokey {
    flex: none;
    width: 16px;
    height: 16px;
    background: #d04a40;
}
```
FILE: scene.js
```js
const SVG_NS = 'http://www.w3.org/2000/svg';
const grid = document.getElementById('grid');
const ticks = document.getElementById('ticks');
const HALF = 12;

// Project a point of the ground plane through the persp camera
function project(x, z) {
    const w = 1 - 0.005717 * x - 0.018935 * z;
    return [
        (641.8 + 33.004 * x - 23.45 * z) / w,
        (397.1 + 6.468 * x + 21.216 * z) / w
    ];
}

function addLine(from, to, isAxis) {
    const line = document.createElementNS(SVG_NS, 'line');
    line.setAttribute('x1', from[0]);
    line.setAttribute('y1', from[1]);
    line.setAttribute('x2', to[0]);
    line.setAttribute('y2', to[1]);
    if (isAxis) {
        line.setAttribute('class', 'axis');
    }
    grid.appendChild(line);
}

for (let i = -HALF; i <= HALF; i++) {
    addLine(project(i, -HALF), project(i, HALF), i === 0);
    addLine(project(-HALF, i), project(HALF, i), i === 0);
}

// Frame numbers on the time slider
for (let frame = 5; frame <= 120; frame += 5) {
    const li = document.createElement('li');
    li.textContent = frame;
    ticks.appendChild(li);
}
```
